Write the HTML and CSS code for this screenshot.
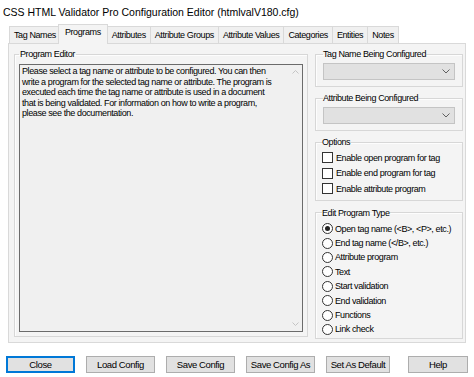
FILE: index.html
```html
<!DOCTYPE html>
<html lang="en">
<head>
  <meta charset="UTF-8">
  <title>CSS HTML Validator Pro Configuration Editor</title>
  <link rel="stylesheet" href="styles.css">
</head>
<body>
  <div class="title">CSS HTML Validator Pro Configuration Editor (htmlvalV180.cfg)</div>

  <div class="tabs">
    <div class="tab">Tag Names</div>
    <div class="tab active">Programs</div>
    <div class="tab">Attributes</div>
    <div class="tab">Attribute Groups</div>
    <div class="tab">Attribute Values</div>
    <div class="tab">Categories</div>
    <div class="tab">Entities</div>
    <div class="tab">Notes</div>
  </div>

  <div class="panel">
    <fieldset class="group editor-group">
      <legend>Program Editor</legend>
      <div class="editor">
        <div class="editor-text">
          Please select a tag name or attribute to be configured. You can then<br>
          write a program for the selected tag name or attribute. The program is<br>
          executed each time the tag name or attribute is used in a document<br>
          that is being validated. For information on how to write a program,<br>
          please see the documentation.
        </div>
        <div class="scroll">
          <svg width="7" height="4" viewBox="0 0 7 4"><path d="M0.5 3.5 L3.5 0.5 L6.5 3.5" /></svg>
          <svg width="7" height="4" viewBox="0 0 7 4"><path d="M0.5 0.5 L3.5 3.5 L6.5 0.5" /></svg>
        </div>
      </div>
    </fieldset>

    <div class="side">
      <fieldset class="group">
        <legend>Tag Name Being Configured</legend>
        <div class="combo">
          <svg width="8" height="5" viewBox="0 0 8 5"><path d="M0.5 0.5 L4 4 L7.5 0.5" /></svg>
        </div>
      </fieldset>

      <fieldset class="group">
        <legend>Attribute Being Configured</legend>
        <div class="combo">
          <svg width="8" height="5" viewBox="0 0 8 5"><path d="M0.5 0.5 L4 4 L7.5 0.5" /></svg>
        </div>
      </fieldset>

      <fieldset class="group options">
        <legend>Options</legend>
        <div class="check"><span class="box"></span>Enable open program for tag</div>
        <div class="check"><span class="box"></span>Enable end program for tag</div>
        <div class="check"><span class="box"></span>Enable attribute program</div>
      </fieldset>

      <fieldset class="group types">
        <legend>Edit Program Type</legend>
        <div class="radio"><span class="dot checked"></span>Open tag name (&lt;B&gt;, &lt;P&gt;, etc.)</div>
        <div class="radio"><span class="dot"></span>End tag name (&lt;/B&gt;, etc.)</div>
        <div class="radio"><span class="dot"></span>Attribute program</div>
        <div class="radio"><span class="dot"></span>Text</div>
        <div class="radio"><span class="dot"></span>Start validation</div>
        <div class="radio"><span class="dot"></span>End validation</div>
        <div class="radio"><span class="dot"></span>Functions</div>
        <div class="radio"><span class="dot"></span>Link check</div>
      </fieldset>
    </div>
  </div>

  <div class="buttons">
    <button class="btn focused">Close</button>
    <button class="btn">Load Config</button>
    <button class="btn">Save Config</button>
    <button class="btn">Save Config As</button>
    <button class="btn narrow">Set As Default</button>
    <button class="btn help">Help</button>
  </div>
</body>
</html>
```

FILE: styles.css
```css
body {
  margin: 0;
  background-color: #fff;
  font-family: "Liberation Sans", Arial, sans-serif;
  font-size: 9px;
  letter-spacing: -0.4px;
  color: #000;
}

.title {
  height: 24px;
  box-sizing: border-box;
  padding: 5px 0 0 3px;
  font-size: 10.5px;
  letter-spacing: 0;
  line-height: 14px;
}

/* tab strip */
.tabs {
  display: flex;
  align-items: flex-end;
  height: 19px;
  margin-left: 9px;
  position: relative;
  z-index: 1;
}

.tab {
  height: 17px;
  box-sizing: border-box;
  padding: 0 4px;
  margin-right: -1px;
  border: 1px solid #d9d9d9;
  border-bottom: none;
  background-color: #f0f0f0;
  line-height: 16px;
  white-space: nowrap;
}

.tab.active {
  height: 20px;
  margin: 0 -1px -1px -2px;
  padding: 0 6px;
  background-color: #f4f4f4;
  line-height: 15px;
}

.panel {
  display: flex;
  gap: 7px;
  width: 458px;
  height: 300px;
  box-sizing: border-box;
  margin-left: 8px;
  padding: 4px 0 5px 5px;
  border: 1px solid #d9d9d9;
  background-color: #f4f4f4;
}

.group {
  margin: 0;
  border: 1px solid #d7d7d7;
  box-shadow: inset 1px 1px 0 #fdfdfd;
  min-width: 0;
}

.group legend {
  padding: 0;
  line-height: 12px;
  white-space: nowrap;
}

/* program editor */
.editor-group {
  width: 294px;
  box-sizing: border-box;
  padding: 4px 4px 5px 4px;
}

.editor-group legend {
  padding: 0 1px;
}

.editor {
  display: flex;
  height: 268px;
  box-sizing: border-box;
  border: 1px solid #6b6b6b;
  background-color: #f0f0f0;
}

.editor-text {
  flex: 1;
  padding: 1px 2px;
  line-height: 10.5px;
  white-space: nowrap;
}

.scroll {
  width: 13px;
  display: flex;
  flex-direction: column;
  justify-content: space-between;
  align-items: center;
  padding: 5px 0 5px;
}

.scroll svg path {
  fill: none;
  stroke: #c4c4c4;
}

/* right column */
.side {
  width: 148px;
  display: flex;
  flex-direction: column;
}

.side .group {
  padding: 3px 7px 6px 7px;
  margin-bottom: 5px;
}

.combo {
  height: 17px;
  box-sizing: border-box;
  border: 1px solid #c4c4c4;
  background-color: #e1e1e1;
  display: flex;
  align-items: center;
  justify-content: flex-end;
  padding-right: 4px;
}

.combo svg path {
  fill: none;
  stroke: #606060;
}

.side .options {
  padding: 2px 7px 3px 6px;
  margin-bottom: 6px;
}

.check,
.radio {
  display: flex;
  align-items: center;
  white-space: nowrap;
}

.check {
  height: 15.5px;
}

.box {
  flex-shrink: 0;
  width: 11px;
  height: 11px;
  box-sizing: border-box;
  border: 1px solid #333;
  background-color: #fff;
  margin-right: 3px;
}

.side .types {
  padding: 3px 7px 1px 6px;
  margin-bottom: 0;
}

.radio {
  height: 14.4px;
}

.dot {
  flex-shrink: 0;
  width: 11px;
  height: 11px;
  box-sizing: border-box;
  border: 1px solid #333;
  border-radius: 50%;
  background-color: #fff;
  margin-right: 2px;
  display: flex;
  align-items: center;
  justify-content: center;
}

.dot.checked::after {
  content: "";
  width: 5px;
  height: 5px;
  border-radius: 50%;
  background-color: #222;
}

/* bottom buttons */
.buttons {
  display: flex;
  gap: 11px;
  padding: 13px 6px 0 6px;
}

.btn {
  width: 69px;
  height: 17px;
  padding: 0;
  border: 1px solid #adadad;
  background-color: #e1e1e1;
  font-family: inherit;
  font-size: 9.5px;
  letter-spacing: -0.4px;
  white-space: nowrap;
  color: #000;
}

.btn.focused {
  border: 2px solid #0078d7;
}

.btn.narrow {
  width: 64px;
}

.btn.help {
  width: 60px;
  margin-left: auto;
}
```
